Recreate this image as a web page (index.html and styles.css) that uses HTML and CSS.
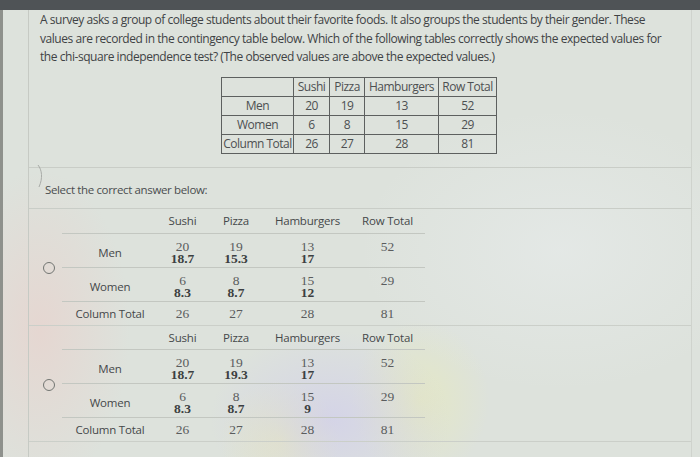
FILE: index.html
```html
<!DOCTYPE html>
<html>
<head>
<meta charset="utf-8">
<link rel="stylesheet" href="styles.css">
</head>
<body>
<div class="topbar"></div>
<div class="frame">
  <div class="edge"></div>
  <div class="gutter"></div>
  <div class="panel">
    <p class="question">A survey asks a group of college students about their favorite foods. It also groups the students by their gender. These<br>values are recorded in the contingency table below. Which of the following tables correctly shows the expected values for<br>the chi-square independence test? (The observed values are above the expected values.)</p>
    <table class="given">
      <colgroup><col class="lab"><col class="c1"><col class="c2"><col class="c3"><col class="c4"></colgroup>
      <tr><th></th><th>Sushi</th><th>Pizza</th><th>Hamburgers</th><th>Row Total</th></tr>
      <tr><td>Men</td><td>20</td><td>19</td><td>13</td><td>52</td></tr>
      <tr><td>Women</td><td>6</td><td>8</td><td>15</td><td>29</td></tr>
      <tr><td>Column Total</td><td>26</td><td>27</td><td>28</td><td>81</td></tr>
    </table>
    <div class="divider">
      <svg class="mark" width="8" height="24" viewBox="0 0 8 24"><path d="M1 1 C5 6 6 14 2 23" fill="none" stroke="#a9aca8" stroke-width="1"/></svg>
    </div>
    <p class="select">Select the correct answer below:</p>
    <div class="option">
      <span class="radio"></span>
      <div class="ans">
        <div class="row hd"><span></span><span>Sushi</span><span>Pizza</span><span>Hamburgers</span><span>Row Total</span></div>
        <div class="row big"><span class="lab">Men</span><span class="num"><i>20</i><b>18.7</b></span><span class="num"><i>19</i><b>15.3</b></span><span class="num"><i>13</i><b>17</b></span><span class="num"><i>52</i></span></div>
        <div class="row big"><span class="lab">Women</span><span class="num"><i>6</i><b>8.3</b></span><span class="num"><i>8</i><b>8.7</b></span><span class="num"><i>15</i><b>12</b></span><span class="num"><i>29</i></span></div>
        <div class="row ft"><span class="lab">Column Total</span><span class="num"><i>26</i></span><span class="num"><i>27</i></span><span class="num"><i>28</i></span><span class="num"><i>81</i></span></div>
      </div>
    </div>
    <div class="option">
      <span class="radio"></span>
      <div class="ans">
        <div class="row hd"><span></span><span>Sushi</span><span>Pizza</span><span>Hamburgers</span><span>Row Total</span></div>
        <div class="row big"><span class="lab">Men</span><span class="num"><i>20</i><b>18.7</b></span><span class="num"><i>19</i><b>19.3</b></span><span class="num"><i>13</i><b>17</b></span><span class="num"><i>52</i></span></div>
        <div class="row big"><span class="lab">Women</span><span class="num"><i>6</i><b>8.3</b></span><span class="num"><i>8</i><b>8.7</b></span><span class="num"><i>15</i><b>9</b></span><span class="num"><i>29</i></span></div>
        <div class="row ft"><span class="lab">Column Total</span><span class="num"><i>26</i></span><span class="num"><i>27</i></span><span class="num"><i>28</i></span><span class="num"><i>81</i></span></div>
      </div>
    </div>
  </div>
</div>
</body>
</html>
```

FILE: styles.css
```css
html, body {
  margin: 0;
  padding: 0;
}
body {
  width: 700px;
  height: 457px;
  overflow: hidden;
  font-family: "Open Sans", "Liberation Sans", sans-serif;
  font-stretch: 88%;
  color: #45484a;
  background:
    radial-gradient(ellipse 90px 160px at 40px 330px, rgba(236, 205, 200, 0.55), rgba(236, 205, 200, 0) 100%),
    radial-gradient(ellipse 120px 90px at 330px 420px, rgba(205, 200, 240, 0.55), rgba(205, 200, 240, 0) 100%),
    radial-gradient(ellipse 60px 60px at 280px 440px, rgba(240, 240, 170, 0.5), rgba(240, 240, 170, 0) 100%),
    radial-gradient(ellipse 70px 80px at 420px 400px, rgba(236, 238, 170, 0.45), rgba(236, 238, 170, 0) 100%),
    radial-gradient(ellipse 200px 140px at 560px 250px, rgba(232, 236, 236, 0.6), rgba(232, 236, 236, 0) 100%),
    #dde2dc;
}
.topbar {
  height: 10px;
  background: #4f5356;
}
.frame {
  display: flex;
  height: 447px;
}
.edge {
  width: 3px;
  background: #8e918c;
}
.gutter {
  width: 25px;
  border-right: 1px solid #c6cac4;
}
.panel {
  width: 662px;
  border-right: 1px solid #cfd3cd;
}
.question {
  margin: 0;
  padding: 1px 0 0 11px;
  font-size: 12px;
  line-height: 18.5px;
  letter-spacing: -0.45px;
  white-space: nowrap;
  color: #3f4245;
}
.given {
  border-collapse: collapse;
  table-layout: fixed;
  width: 275px;
  margin: 10px 0 0 192px;
  font-size: 12px;
  letter-spacing: -0.5px;
  color: #4d5052;
  white-space: nowrap;
}
.given col.lab { width: 72px; }
.given col.c1 { width: 36px; }
.given col.c2 { width: 35px; }
.given col.c3 { width: 74px; }
.given col.c4 { width: 58px; }
.given th, .given td {
  border: 1.5px solid #5d605f;
  height: 18px;
  padding: 0;
  text-align: center;
  font-weight: normal;
  line-height: 18px;
  overflow: hidden;
}
.divider {
  margin-top: 13px;
  border-top: 1px solid #c9cdc7;
  height: 0;
}
.mark {
  display: block;
  margin: -4px 0 0 8px;
}
.select {
  margin: 13px 0 0 0;
  padding: 0 0 9px 16px;
  font-size: 11.5px;
  line-height: 18px;
  letter-spacing: -0.35px;
  color: #4a4d4f;
  border-bottom: 1px solid #c9cdc7;
}
.option {
  display: flex;
  align-items: center;
  border-bottom: 1px solid #cbcfc9;
}
.radio {
  width: 10px;
  height: 10px;
  border: 1.5px solid #727572;
  border-radius: 50%;
  margin: 3px 7px 0 14px;
  flex: none;
}
.ans {
  display: flex;
  flex-direction: column;
  width: 363px;
  font-size: 11.5px;
  letter-spacing: -0.2px;
  color: #45484a;
  white-space: nowrap;
}
.row {
  display: grid;
  grid-template-columns: 96px 49px 58px 85px 75px;
  align-items: center;
  text-align: center;
}
.row.hd { height: 24px; border-bottom: 1px solid #c3c7c1; }
.row.big { height: 33px; border-bottom: 1px solid #c3c7c1; }
.row.ft { height: 23px; }
.option + .option .row.hd { height: 23px; }
.row.big .lab { padding-top: 4px; }
.num {
  display: flex;
  flex-direction: column;
  align-items: center;
  font-family: "Liberation Serif", "DejaVu Serif", serif;
  letter-spacing: 0;
  font-size: 13.5px;
  line-height: 12px;
}
.row.big .num { align-self: start; padding-top: 7px; }
.row.ft .num { padding-top: 2px; }
.num i { font-style: normal; color: #5a5c5d; }
.num b { font-weight: bold; color: #3c3f41; }
```
